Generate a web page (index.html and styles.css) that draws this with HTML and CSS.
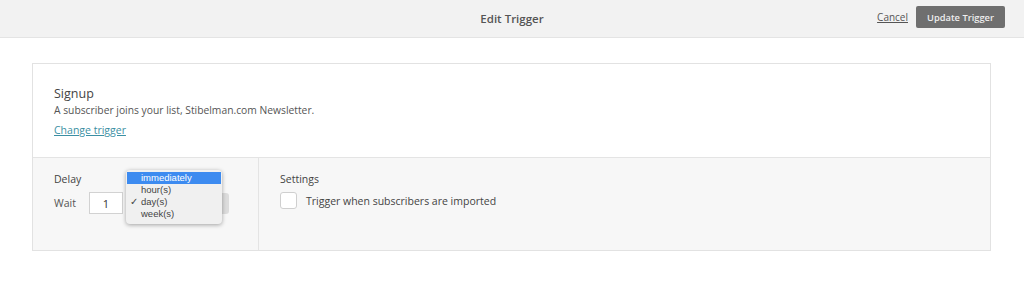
FILE: index.html
```
<!DOCTYPE html>
<html>
<head>
<meta charset="utf-8">
<link rel="stylesheet" href="styles.css">
</head>
<body>
<header class="topbar">
  <div class="title">Edit Trigger</div>
  <div class="actions">
    <a class="cancel" href="#">Cancel</a>
    <button class="update">Update Trigger</button>
  </div>
</header>
<main class="card">
  <section class="summary">
    <h2 class="heading">Signup</h2>
    <p class="desc">A subscriber joins your list, Stibelman.com Newsletter.</p>
    <a class="change" href="#">Change trigger</a>
  </section>
  <section class="options">
    <div class="delay">
      <div class="label">Delay</div>
      <div class="wait-row">
        <span class="wait">Wait</span>
        <input class="num" type="text" value="1">
        <div class="select-wrap">
          <div class="select"></div>
          <ul class="menu">
            <li class="item active">immediately</li>
            <li class="item">hour(s)</li>
            <li class="item checked"><span class="check">✓</span>day(s)</li>
            <li class="item">week(s)</li>
          </ul>
        </div>
      </div>
    </div>
    <div class="settings">
      <div class="label">Settings</div>
      <label class="check-row">
        <span class="box"></span>
        <span class="check-label">Trigger when subscribers are imported</span>
      </label>
    </div>
  </section>
</main>
</body>
</html>
```
FILE: styles.css
```
* { box-sizing: border-box; }
body {
  margin: 0;
  font-family: "Open Sans", "Liberation Sans", sans-serif;
  color: #444;
  background: #fff;
}
.topbar {
  height: 38px;
  background: #f2f2f2;
  border-bottom: 1px solid #e4e4e4;
  display: flex;
  align-items: center;
  justify-content: center;
  position: relative;
}
.title {
  font-size: 11.5px;
  font-weight: 600;
  color: #555;
}
.actions {
  position: absolute;
  right: 19px;
  top: 6px;
  display: flex;
  align-items: center;
  gap: 8px;
}
.cancel {
  font-size: 10px;
  color: #555;
  text-decoration: underline;
}
.update {
  width: 89px;
  height: 22px;
  background: #6f6f6f;
  border: none;
  border-radius: 2px;
  color: #eee;
  font-family: "Open Sans", "Liberation Sans", sans-serif;
  font-size: 9.3px;
  font-weight: 600;
  padding: 0;
}
.card {
  margin: 25px 33px 0 32px;
  border: 1px solid #e2e2e2;
}
.summary {
  height: 94px;
  padding: 21px 21px 0;
  background: #fff;
  border-bottom: 1px solid #e4e4e4;
}
.heading {
  margin: 0;
  font-size: 12.5px;
  font-weight: 400;
  color: #444;
  line-height: 17px;
}
.desc {
  margin: 1px 0 0;
  font-size: 10.3px;
  line-height: 14px;
  color: #555;
}
.change {
  display: inline-block;
  margin-top: 6px;
  font-size: 10.5px;
  line-height: 14px;
  color: #3b8fa3;
  text-decoration: underline;
}
.options {
  display: flex;
  height: 92px;
  background: #f7f7f7;
}
.delay {
  width: 226px;
  border-right: 1px solid #e4e4e4;
  padding: 14px 21px 0;
}
.settings {
  flex: 1;
  padding: 14px 21px 0;
}
.label {
  font-size: 10.5px;
  line-height: 15px;
  color: #444;
}
.wait-row {
  display: flex;
  align-items: center;
  margin-top: 5px;
  position: relative;
}
.wait {
  font-size: 10.5px;
  color: #555;
  width: 35px;
}
.num {
  width: 34px;
  height: 22px;
  border: 1px solid #d2d2d2;
  background: #fff;
  font-family: "Open Sans", "Liberation Sans", sans-serif;
  font-size: 11px;
  text-align: center;
  padding: 0;
  color: #333;
}
.select-wrap {
  position: relative;
  margin-left: 3px;
}
.select {
  width: 103px;
  height: 21px;
  background: #dcdcdc;
  border-radius: 3px;
}
.menu {
  position: absolute;
  left: 0;
  top: -23px;
  width: 96px;
  margin: 0;
  padding: 2px 0 4px;
  list-style: none;
  background: #f0f0f0;
  border-radius: 4px;
  box-shadow: 0 1px 4px rgba(0,0,0,0.35);
  font-family: "Liberation Sans", Arial, sans-serif;
  font-size: 9.5px;
  font-weight: 400;
  color: #444;
}
.item {
  height: 12px;
  line-height: 12px;
  padding-left: 15px;
  position: relative;
}
.item.active {
  background: #3d8bf0;
  color: #fff;
  margin: 0 1px;
  padding-left: 14px;
}
.check {
  position: absolute;
  left: 4px;
  top: 0;
}
.check-row {
  display: flex;
  align-items: center;
  gap: 9px;
  margin-top: 5px;
}
.box {
  width: 17px;
  height: 17px;
  border: 1px solid #cfcfcf;
  border-radius: 3px;
  background: #fff;
}
.check-label {
  font-size: 10.5px;
  color: #444;
}
```
